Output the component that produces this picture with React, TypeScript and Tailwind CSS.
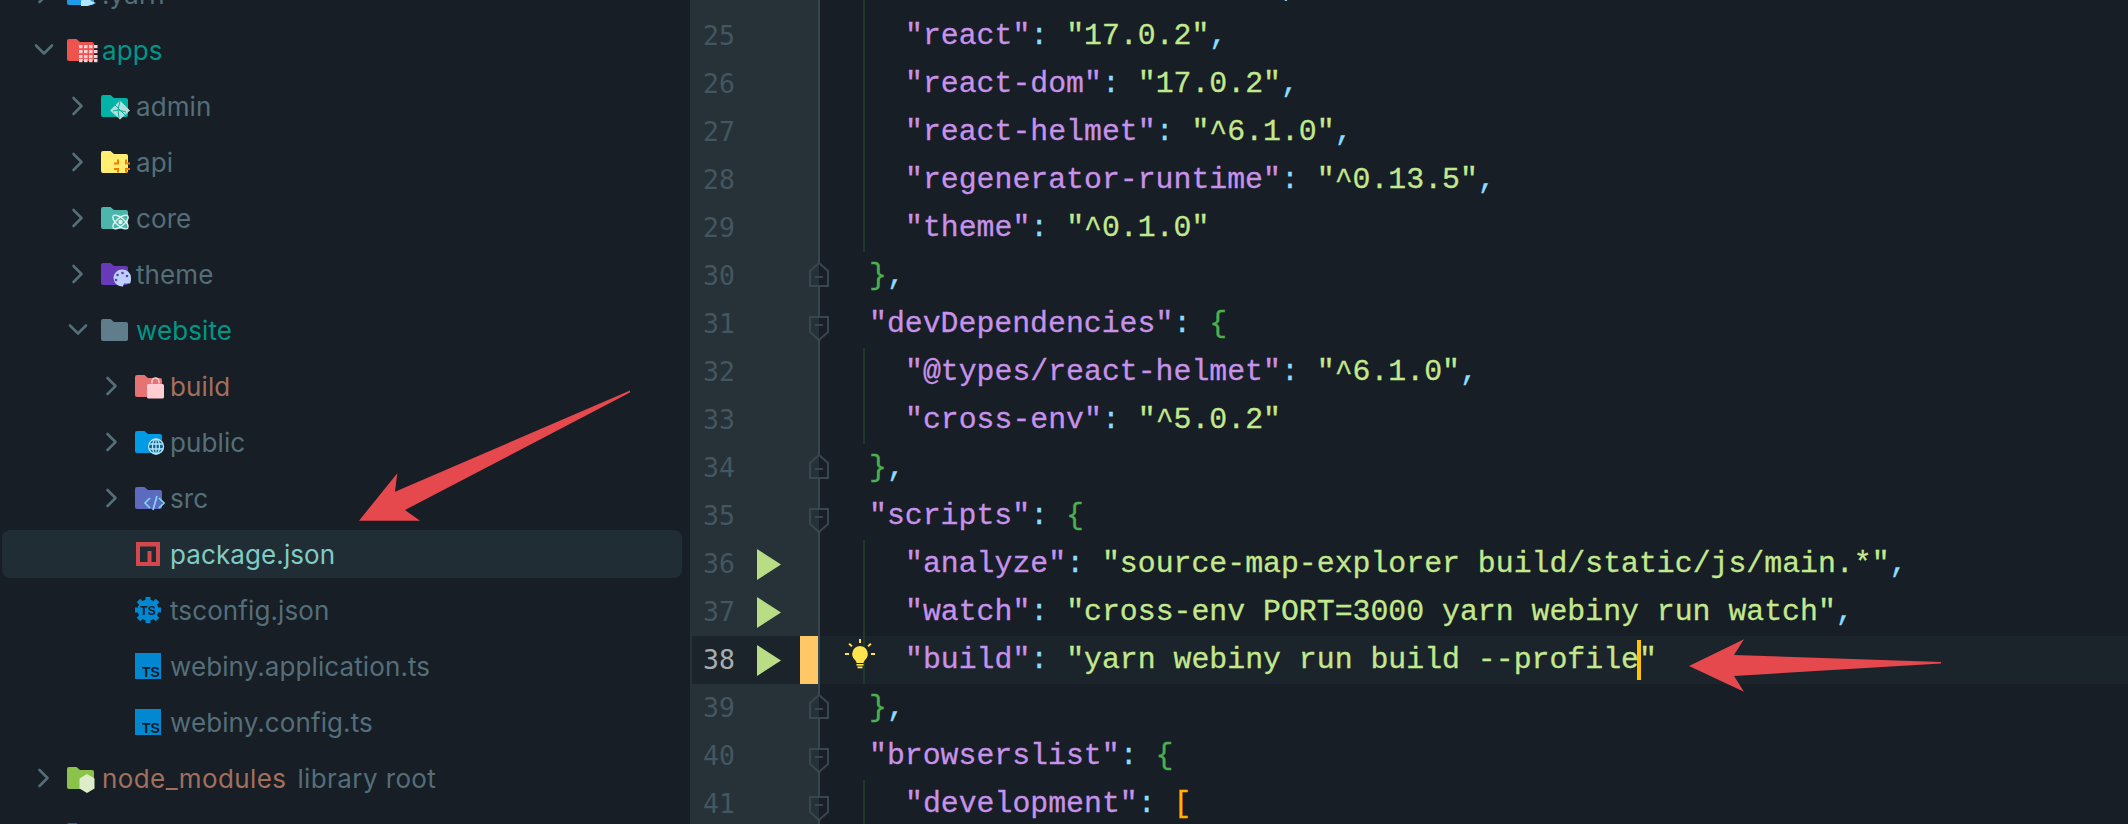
import React from "react";

const sans = "font-['Inter',sans-serif]";

function Folder({ color }: { color: string }) {
  return (
    <path
      d="M2 0h7.500l3.500 3h12a2 2 0 0 1 2 2v15a2 2 0 0 1-2 2H2a2 2 0 0 1-2-2V2a2 2 0 0 1 2-2z"
      fill={color}
    />
  );
}

function Overlay({ kind }: { kind: string }) {
  switch (kind) {
    case "apps": {
      const xs = [12, 17, 22, 27];
      const ys = [6, 11, 16, 20];
      return (
        <g fill="#ffcdd2">
          {xs.map((x) => ys.map((y) => <rect key={x + "-" + y} x={x} y={y} width="3.500" height="3.200" />))}
        </g>
      );
    }
    case "admin":
      return (
        <g>
          <path d="M19 5.500l10 10-10 9-10-9z" fill="#b2dfdb" />
          <path d="M14 10l10 10M19 6l-2 9 8 2M12 16l5-1 1 8" stroke="#00a596" strokeWidth="0.900" fill="none" />
        </g>
      );
    case "api":
      return (
        <g stroke="#f57c00" strokeWidth="2" fill="none">
          <path d="M13 12.500h4v-4M29 12.500h-4v-4M13 18h4v3.500M29 18h-4v3.500" />
        </g>
      );
    case "core":
      return (
        <g stroke="#e0f2f1" strokeWidth="1.400" fill="none">
          <ellipse cx="19.500" cy="15" rx="9.500" ry="4" transform="rotate(40 19.500 15)" />
          <ellipse cx="19.500" cy="15" rx="9.500" ry="4" transform="rotate(-40 19.500 15)" />
          <circle cx="19.500" cy="15" r="1.500" fill="#e0f2f1" />
        </g>
      );
    case "theme":
      return (
        <g>
          <path d="M21 6.500a8.500 8.500 0 1 0 0 17c2 0 1-2 2-3h6c.8-1 1-3 1-5.500a8.500 8.500 0 0 0-9-8.500z" fill="#bbd1fb" />
          <circle cx="16.500" cy="12" r="1.300" fill="#673ab7" />
          <circle cx="21.500" cy="10" r="1.300" fill="#673ab7" />
          <circle cx="26" cy="13" r="1.300" fill="#673ab7" />
          <circle cx="15" cy="17" r="1.300" fill="#673ab7" />
        </g>
      );
    case "build":
      return (
        <g>
          <path d="M17 8.500v-2a3.500 3.500 0 0 1 7 0v2" fill="none" stroke="#ffcdd2" strokeWidth="1.500" />
          <rect x="12" y="9" width="17" height="14.500" rx="1.500" fill="#ffcdd2" />
        </g>
      );
    case "public":
      return (
        <g>
          <circle cx="21" cy="15.500" r="8.300" fill="#0b5f8e" />
          <g stroke="#b3e5fc" strokeWidth="1.300" fill="none">
            <circle cx="21" cy="15.500" r="7.500" />
            <ellipse cx="21" cy="15.500" rx="3.500" ry="7.500" />
            <path d="M21 8v15M14 13h14M14 18h14" />
          </g>
        </g>
      );
    case "src":
      return (
        <g stroke="#81d4fa" strokeWidth="1.700" fill="none">
          <path d="M15 11l-5 5 5 5M24 11l5 5-5 5M22 9l-4 14" />
        </g>
      );
    case "node":
      return <path d="M20 7l7.500 4.500v10L20 26l-7.500-4.500v-10z" fill="#dcedc8" />;
    case "yarn":
      return <path d="M14 18l5-9 5 9 5 2-8 3h-7z" fill="#b3e5fc" />;
    default:
      return null;
  }
}

function FolderIcon({ color, kind }: { color: string; kind?: string }) {
  return (
    <svg width="32" height="28" viewBox="0 0 32 28" className="overflow-visible self-center -mb-[6px] shrink-0">
      <Folder color={color} />
      {kind && <Overlay kind={kind} />}
    </svg>
  );
}

function Chevron({ open }: { open?: boolean }) {
  return (
    <svg width="20" height="20" viewBox="0 0 20 20" className="shrink-0 mr-[13px]" fill="none" stroke="#546e7a" strokeWidth="2.600" strokeLinecap="round" strokeLinejoin="round">
      {open ? <path d="M2 5.500l8 8 8-8" /> : <path d="M5.500 2l8 8-8 8" />}
    </svg>
  );
}

function NpmIcon() {
  return (
    <svg width="26" height="26" viewBox="0 0 26 26" className="shrink-0 mr-[9px]">
      <rect x="1" y="1" width="24" height="24" fill="#d2484d" />
      <rect x="5" y="5.500" width="16" height="15.500" fill="#1f2a32" />
      <rect x="12.500" y="10" width="4" height="11" fill="#d2484d" />
    </svg>
  );
}

function GearIcon() {
  return (
    <svg width="26" height="26" viewBox="0 0 26 26" className="shrink-0 mr-[9px]">
      <g fill="#0288d1">
        <circle cx="13" cy="13" r="10.500" />
        {[0, 45, 90, 135, 180, 225, 270, 315].map((a) => (
          <rect key={a} x="10.500" y="-0.500" width="5" height="6" transform={`rotate(${a} 13 13)`} />
        ))}
      </g>
      <text x="13" y="17.500" textAnchor="middle" fontSize="12" fontWeight="700" fontFamily="Liberation Sans, sans-serif" fill="#14202b">TS</text>
    </svg>
  );
}

function TsIcon() {
  return (
    <svg width="26" height="26" viewBox="0 0 26 26" className="shrink-0 mr-[9px]">
      <rect x="0" y="0" width="26" height="26" fill="#0288d1" />
      <text x="16" y="24" textAnchor="middle" fontSize="14" fontWeight="700" fontFamily="Liberation Sans, sans-serif" fill="#14202b">TS</text>
    </svg>
  );
}

type Item = {
  name?: string;
  depth: number;
  folder?: string;
  kind?: string;
  open?: boolean;
  file?: "npm" | "gear" | "ts";
  color: string;
  selected?: boolean;
  extra?: string;
};

const items: Item[] = [
  { name: ".yarn", depth: 0, folder: "#1e9be9", kind: "yarn", color: "text-[#546e7a]" },
  { name: "apps", depth: 0, folder: "#ef5350", kind: "apps", open: true, color: "text-[#009688]" },
  { name: "admin", depth: 1, folder: "#00b3a6", kind: "admin", color: "text-[#546e7a]" },
  { name: "api", depth: 1, folder: "#ffee70", kind: "api", color: "text-[#546e7a]" },
  { name: "core", depth: 1, folder: "#4db6ac", kind: "core", color: "text-[#546e7a]" },
  { name: "theme", depth: 1, folder: "#673ab7", kind: "theme", color: "text-[#546e7a]" },
  { name: "website", depth: 1, folder: "#607d8b", open: true, color: "text-[#009688]" },
  { name: "build", depth: 2, folder: "#e57373", kind: "build", color: "text-[#a1705f]" },
  { name: "public", depth: 2, folder: "#039be5", kind: "public", color: "text-[#546e7a]" },
  { name: "src", depth: 2, folder: "#5c6bc0", kind: "src", color: "text-[#546e7a]" },
  { name: "package.json", depth: 2, file: "npm", color: "text-[#80cbc4]", selected: true },
  { name: "tsconfig.json", depth: 2, file: "gear", color: "text-[#546e7a]" },
  { name: "webiny.application.ts", depth: 2, file: "ts", color: "text-[#546e7a]" },
  { name: "webiny.config.ts", depth: 2, file: "ts", color: "text-[#546e7a]" },
  { name: "node_modules", depth: 0, folder: "#8bc34a", kind: "node", color: "text-[#a1705f] tracking-[0.4px]", extra: "library root" },
  { depth: 0, folder: "#3f51b5", color: "text-[#546e7a]" },
];

const pads = ["pl-[32px]", "pl-[66px]", "pl-[100px]"];
const filePad = "pl-[133px]";

function TreeRow({ item }: { item: Item }) {
  return (
    <div
      className={`h-[48px] shrink-0 flex items-center rounded-lg text-[26px] tracking-[0.1px] whitespace-nowrap ${item.color} ${
        item.file ? filePad : pads[item.depth]
      } ${item.selected ? "bg-[#212d35]" : ""}`}
    >
      {item.folder && <Chevron open={item.open} />}
      {item.folder && (
        <span className="w-[35px] shrink-0 flex items-center">
          <FolderIcon color={item.folder} kind={item.kind} />
        </span>
      )}
      {item.file === "npm" && <NpmIcon />}
      {item.file === "gear" && <GearIcon />}
      {item.file === "ts" && <TsIcon />}
      {item.name && <span>{item.name}</span>}
      {item.extra && <span className="ml-[11px] text-[#546e7a]">{item.extra}</span>}
    </div>
  );
}

function Sidebar() {
  return (
    <div className={`w-[690px] shrink-0 h-full overflow-hidden pl-[2px] pr-[8px] ${sans}`}>
      <div className="flex flex-col gap-2 -mt-[30px]">
        {items.map((it, i) => (
          <TreeRow key={i} item={it} />
        ))}
      </div>
    </div>
  );
}

type Line = {
  n?: number;
  level: 1 | 2;
  guide?: boolean;
  keyName?: string;
  value?: string;
  open?: string;
  close?: boolean;
  comma?: boolean;
  run?: boolean;
  fold?: "up" | "down";
  current?: boolean;
};

const lines: Line[] = [
  { n: 25, level: 2, guide: true, keyName: "react", value: "17.0.2", comma: true },
  { n: 26, level: 2, guide: true, keyName: "react-dom", value: "17.0.2", comma: true },
  { n: 27, level: 2, guide: true, keyName: "react-helmet", value: "^6.1.0", comma: true },
  { n: 28, level: 2, guide: true, keyName: "regenerator-runtime", value: "^0.13.5", comma: true },
  { n: 29, level: 2, guide: true, keyName: "theme", value: "^0.1.0" },
  { n: 30, level: 1, close: true, comma: true, fold: "up" },
  { n: 31, level: 1, keyName: "devDependencies", open: "{", fold: "down" },
  { n: 32, level: 2, guide: true, keyName: "@types/react-helmet", value: "^6.1.0", comma: true },
  { n: 33, level: 2, guide: true, keyName: "cross-env", value: "^5.0.2" },
  { n: 34, level: 1, close: true, comma: true, fold: "up" },
  { n: 35, level: 1, keyName: "scripts", open: "{", fold: "down" },
  { n: 36, level: 2, guide: true, keyName: "analyze", value: "source-map-explorer build/static/js/main.*", comma: true, run: true },
  { n: 37, level: 2, guide: true, keyName: "watch", value: "cross-env PORT=3000 yarn webiny run watch", comma: true, run: true },
  { n: 38, level: 2, guide: true, keyName: "build", value: "yarn webiny run build --profile", run: true, current: true },
  { n: 39, level: 1, close: true, comma: true, fold: "up" },
  { n: 40, level: 1, keyName: "browserslist", open: "{", fold: "down" },
  { n: 41, level: 2, guide: true, keyName: "development", open: "[", fold: "down" },
];

function FoldMark({ dir }: { dir: "up" | "down" }) {
  const up = dir === "up";
  return (
    <svg
      width="20"
      height="25"
      viewBox="0 0 20 25"
      className={`absolute left-[119px] z-10 ${up ? "top-[10px]" : "top-[16px]"}`}
    >
      {up ? (
        <>
          <path d="M10 1L1 9V24H10Z" fill="#263238" />
          <path d="M10 1L19 9V24H10Z" fill="#171e25" />
          <path d="M10 1L19 9V24H1V9Z" fill="none" stroke="#37474f" strokeWidth="2" />
          <path d="M6 15H14" stroke="#37474f" strokeWidth="2" />
        </>
      ) : (
        <>
          <path d="M10 24L1 16V1H10Z" fill="#263238" />
          <path d="M10 24L19 16V1H10Z" fill="#171e25" />
          <path d="M1 1H19V16L10 24L1 16Z" fill="none" stroke="#37474f" strokeWidth="2" />
          <path d="M6 9H14" stroke="#37474f" strokeWidth="2" />
        </>
      )}
    </svg>
  );
}

function Bulb() {
  return (
    <svg width="30" height="30" viewBox="0 0 30 30" className="absolute left-[25px] top-[3px] z-10">
      <g fill="#ffe44d">
        <path d="M15 7a8 8 0 0 0-5 14c1 1 1.500 2 1.500 3h7c0-1 .5-2 1.500-3a8 8 0 0 0-5-14z" />
        <rect x="11.500" y="25" width="7" height="1.600" />
        <rect x="12.500" y="27.500" width="5" height="1.800" />
        <rect x="14" y="0" width="2" height="4" />
        <rect x="0" y="14" width="4" height="2" />
        <rect x="26" y="14" width="4" height="2" />
        <rect x="4.500" y="4" width="2" height="4" transform="rotate(-45 5.500 6)" />
        <rect x="23.500" y="4" width="2" height="4" transform="rotate(45 24.500 6)" />
      </g>
    </svg>
  );
}

function CodeRow({ line }: { line: Line }) {
  return (
    <div className="flex h-[48px] shrink-0">
      <div className="relative w-[130px] shrink-0 bg-[#263238] border-r-2 border-[#37474f] flex">
        <div className={`flex flex-1 min-w-0 ${line.current ? "ml-[2px] bg-[#1c242b]" : ""}`}>
          <span
            className={`${line.current ? "pl-[11px] w-[65px] text-[#a7adb1]" : "pl-[13px] w-[67px] text-[#44565f]"} shrink-0 text-[26.500px] leading-[48px] font-['DejaVu_Sans_Mono',monospace]`}
          >
            {line.n}
          </span>
          {line.run && (
            <svg width="24" height="31" viewBox="0 0 24 31" className="self-center shrink-0">
              <path d="M0 0L24 15.500L0 31Z" fill="#b8dd84" />
            </svg>
          )}
          {line.current && <span className="ml-auto w-[18px] bg-[#ffc766]" />}
        </div>
        {line.fold && <FoldMark dir={line.fold} />}
      </div>
      <div className={`relative flex-1 min-w-0 pl-[43px] ${line.current ? "bg-[#1c242b]" : ""}`}>
        {line.current && <Bulb />}
        <div
          className={`h-full border-l-2 ${line.guide ? "border-[#1f3a2c]" : "border-transparent"} ${
            line.level === 2 ? "pl-[40px]" : "pl-[4px]"
          } whitespace-pre text-[29.830px] leading-[48px] [-webkit-text-stroke:0.3px] font-['Liberation_Mono',monospace]`}
        >
          {line.keyName && <span className="text-[#c792ea]">"{line.keyName}"</span>}
          {line.keyName && <span className="text-[#89ddff]">: </span>}
          {line.value !== undefined && (
            <span className="text-[#c3e88d]">
              "{line.value}
              {line.current && (
                <span className="inline-block w-[4px] h-[40px] -mx-[2px] align-middle bg-[#ffc400]" />
              )}
              "
            </span>
          )}
          {line.open && <span className={line.open === "{" ? "text-[#4caf50]" : "text-[#ffb300]"}>{line.open}</span>}
          {line.close && <span className="text-[#4caf50]">{"}"}</span>}
          {line.comma && <span className="text-[#89ddff]">,</span>}
        </div>
      </div>
    </div>
  );
}

function Editor() {
  return (
    <div className="flex-1 min-w-0 h-full overflow-hidden flex flex-col">
      <div className="flex h-[48px] shrink-0 -mt-[36px]">
        <div className="w-[130px] shrink-0 bg-[#263238] border-r-2 border-[#37474f]" />
        <div className="flex-1 min-w-0 pl-[43px]">
          <div className="h-full border-l-2 border-[#1f3a2c] pl-[40px] whitespace-pre text-[29.830px] leading-[48px] font-['Liberation_Mono',monospace] text-[#89ddff]">
            {"                     ,"}
          </div>
        </div>
      </div>
      {lines.map((l) => (
        <CodeRow key={l.n} line={l} />
      ))}
    </div>
  );
}

export default function App() {
  return (
    <div className="relative w-[2128px] h-[824px] overflow-hidden bg-[#171e25] flex">
      <Sidebar />
      <Editor />
      <svg width="2128" height="824" viewBox="0 0 2128 824" className="absolute inset-0 z-20 pointer-events-none">
        <polygon points="630,390.500 630,392.500 405,510 420,520.700 359,520.700 397.300,473.300 395,491.700" fill="#e5484d" />
        <polygon points="1689,666 1744,639.300 1734,655 1941,662 1941,663.500 1734,676 1744,691.700" fill="#e5484d" />
      </svg>
    </div>
  );
}
